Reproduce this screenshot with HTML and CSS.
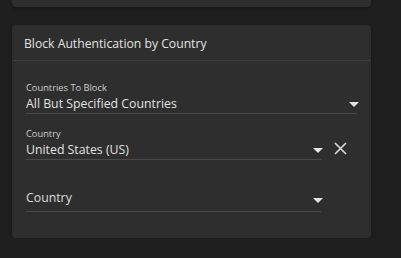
FILE: index.html
```html
<!DOCTYPE html>
<html>
<head>
<meta charset="utf-8">
<link rel="stylesheet" href="styles.css">
</head>
<body>
<div class="page">
  <div class="card card-top"></div>
  <div class="card card-main">
    <div class="card-header">Block Authentication by Country</div>
    <div class="card-body">
      <div class="field">
        <div class="field-box">
          <div class="label">Countries To Block</div>
          <div class="value-row">
            <span class="value">All But Specified Countries</span>
            <span class="arrow"></span>
          </div>
        </div>
      </div>
      <div class="field field-country">
        <div class="field-box">
          <div class="label">Country</div>
          <div class="value-row">
            <span class="value">United States (US)</span>
            <span class="arrow"></span>
          </div>
        </div>
        <button class="clear" aria-label="Remove">
          <svg width="13" height="13" viewBox="0 0 13 13"><path d="M1 1 L12 12 M12 1 L1 12" stroke="#dcdcdc" stroke-width="1.6" fill="none"/></svg>
        </button>
      </div>
      <div class="field field-country field-empty">
        <div class="field-box">
          <div class="value-row">
            <span class="value placeholder">Country</span>
            <span class="arrow"></span>
          </div>
        </div>
        <div class="clear-space"></div>
      </div>
    </div>
  </div>
</div>
</body>
</html>
```
FILE: styles.css
```css
html, body {
  margin: 0;
  padding: 0;
  background: #1f1f1f;
  font-family: "Open Sans", "Noto Sans", sans-serif;
  color: #e2e2e2;
}
.page {
  width: 359px;
  margin-left: 12px;
  display: flex;
  flex-direction: column;
  gap: 18px;
}
.card {
  background: #2e2e2e;
  border-radius: 4px;
  box-shadow: 0 1px 3px rgba(0,0,0,0.35);
}
.card-top {
  height: 7px;
  border-radius: 0 0 4px 4px;
}
.card-main {
  height: 213px;
  display: flex;
  flex-direction: column;
}
.card-header {
  height: 36px;
  box-sizing: border-box;
  padding: 10px 0 0 11px;
  font-size: 12.2px;
  line-height: 18px;
  border-bottom: 1px solid #3e3e3e;
  margin: 0 1px;
}
.card-body {
  padding: 21px 14px 0 14px;
  display: flex;
  flex-direction: column;
  gap: 14px;
}
.field {
  display: flex;
  align-items: flex-end;
}
.field-box {
  flex: 1;
  border-bottom: 1px solid #4a4a4a;
}
.label {
  font-size: 9.3px;
  line-height: 12px;
  color: #cfcfcf;
}
.value-row {
  display: flex;
  align-items: center;
  justify-content: space-between;
  height: 19px;
}
.value {
  font-size: 12.3px;
  line-height: 17px;
}
.placeholder {
  color: #dcdcdc;
}
.arrow {
  width: 0;
  height: 0;
  border-left: 5px solid transparent;
  border-right: 5px solid transparent;
  border-top: 5px solid #e4e4e4;
  margin-right: -2px;
  margin-top: 2px;
}
.clear {
  width: 36px;
  height: 19px;
  margin-bottom: 2px;
  padding: 0 0 0 13px;
  background: none;
  border: none;
  display: flex;
  align-items: center;
  justify-content: flex-start;
}
.clear-space {
  width: 36px;
}
.field-empty {
  margin-top: 15px;
}
.field-empty .value-row {
  height: 22px;
  align-items: flex-start;
}
.field-empty .value {
  line-height: 17px;
}
.field-empty .arrow {
  margin-top: 9px;
}
```
